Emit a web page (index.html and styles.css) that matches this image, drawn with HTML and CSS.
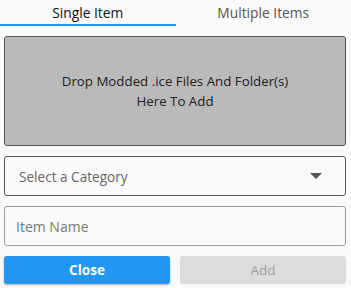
FILE: index.html
```html
<!DOCTYPE html>
<html>
<head>
<meta charset="utf-8">
<link rel="stylesheet" href="styles.css">
</head>
<body>
<div class="app">
  <div class="tabs">
    <div class="tab active">Single Item</div>
    <div class="tab">Multiple Items</div>
  </div>
  <div class="content">
    <div class="dropzone">
      <div>Drop Modded .ice Files And Folder(s)</div>
      <div>Here To Add</div>
    </div>
    <div class="select">
      <span class="placeholder">Select a Category</span>
      <svg class="caret" width="12" height="6" viewBox="0 0 12 6"><path d="M0 0H12L6 6Z" fill="#555"/></svg>
    </div>
    <div class="input">
      <span class="placeholder2">Item Name</span>
    </div>
    <div class="buttons">
      <button class="btn btn-primary">Close</button>
      <button class="btn btn-disabled">Add</button>
    </div>
  </div>
</div>
</body>
</html>
```

FILE: styles.css
```css
html, body {
  margin: 0;
  padding: 0;
  background: #fafafa;
}
body {
  font-family: "Open Sans", "Noto Sans", sans-serif;
  font-size: 13.3px;
  color: #222;
}
.app {
  width: 351px;
  height: 288px;
}
.tabs {
  display: flex;
  height: 26px;
}
.tab {
  flex: 1;
  display: flex;
  align-items: center;
  justify-content: center;
  height: 24px;
  border-bottom: 2px solid transparent;
  color: #555;
  font-size: 13.8px;
}
.tab.active {
  color: #111;
  border-bottom-color: #2196f3;
}
.content {
  display: flex;
  flex-direction: column;
  gap: 10px;
  padding: 10px 5px 0 4px;
}
.dropzone {
  height: 108px;
  background: #bababa;
  border: 1px solid #555;
  border-radius: 3px;
  display: flex;
  flex-direction: column;
  align-items: center;
  justify-content: center;
  line-height: 20px;
  color: #222;
}
.select, .input {
  height: 38px;
  border-radius: 3px;
  display: flex;
  align-items: center;
  justify-content: space-between;
}
.select {
  border: 1px solid #555;
  padding: 0 23px 0 14px;
}
.input {
  border: 1px solid #999;
  padding: 0 11px;
}
.placeholder {
  color: #666;
  font-size: 13.6px;
}
.placeholder2 {
  color: #777;
  font-size: 14px;
}
.buttons {
  display: flex;
  gap: 10px;
}
.btn {
  flex: 1;
  height: 28px;
  border: none;
  border-radius: 3px;
  font-family: "Open Sans", "Noto Sans", sans-serif;
  font-size: 13.5px;
  padding: 0;
}
.btn-primary {
  background: #2196f3;
  color: #fff;
  font-weight: 700;
  box-shadow: 0 1px 2px rgba(0,0,0,0.3);
}
.btn-disabled {
  background: #dcdcdc;
  color: #9e9e9e;
}
```
